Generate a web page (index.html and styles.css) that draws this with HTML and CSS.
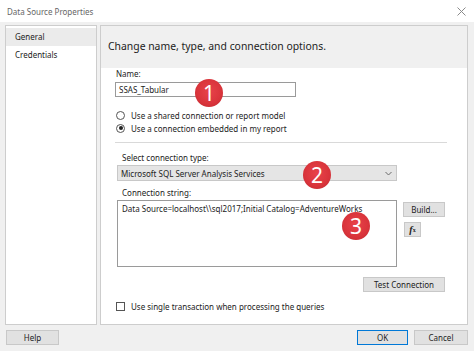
FILE: index.html
```html
<!DOCTYPE html>
<html lang="en">
	<head>
		<meta charset="UTF-8" />
		<meta name="viewport" content="width=device-width, initial-scale=1.0" />
		<title>Data Source Properties</title>
		<link rel="stylesheet" href="styles.css">
	</head>
	<body>
		<div class="titlebar">
			<span class="title">Data Source Properties</span>
			<svg class="close" width="9" height="9" viewBox="0 0 9 9">
				<path d="M0.5 0.5 L8.5 8.5 M8.5 0.5 L0.5 8.5" stroke="#8a8a8a" stroke-width="1" fill="none" />
			</svg>
		</div>

		<div class="main">
			<div class="nav">
				<div class="nav-item selected">General</div>
				<div class="nav-item">Credentials</div>
			</div>

			<div class="panel">
				<div class="panel-header">Change name, type, and connection options.</div>

				<div class="panel-body">
					<div class="label">Name:</div>
					<div class="textbox name-box">SSAS_Tabular</div>

					<label class="radio-row first">
						<span class="radio"></span>
						Use a shared connection or report model
					</label>
					<label class="radio-row">
						<span class="radio checked"></span>
						Use a connection embedded in my report
					</label>

					<div class="separator"></div>

					<div class="group">
						<div class="label indent">Select connection type:</div>
						<div class="dropdown">
							<span>Microsoft SQL Server Analysis Services</span>
							<svg width="7" height="5" viewBox="0 0 7 5">
								<path d="M0.5 1 L3.5 4 L6.5 1" stroke="#6a6a6a" stroke-width="1" fill="none" />
							</svg>
						</div>

						<div class="label indent conn-label">Connection string:</div>
						<div class="conn-row">
							<div class="textarea">Data Source=localhost\\sql2017;Initial Catalog=AdventureWorks</div>
							<div class="side-buttons">
								<div class="btn build">Build...</div>
								<div class="btn fx"><i>f</i><sub>x</sub></div>
							</div>
						</div>

						<div class="test-row">
							<div class="btn test">Test Connection</div>
						</div>
					</div>

					<label class="check-row">
						<span class="checkbox"></span>
						Use single transaction when processing the queries
					</label>
				</div>

				<div class="badge badge-1">1</div>
				<div class="badge badge-2">2</div>
				<div class="badge badge-3">3</div>
			</div>
		</div>

		<div class="footer">
			<div class="btn help">Help</div>
			<div class="footer-right">
				<div class="btn ok">OK</div>
				<div class="btn cancel">Cancel</div>
			</div>
		</div>
	</body>
</html>
```

FILE: styles.css
```css
body {
	margin: 0;
	width: 474px;
	height: 351px;
	background: #f0f0f0;
	font-family: "Noto Sans", "Open Sans", sans-serif;
	font-size: 8px;
	color: #222;
	overflow: hidden;
}

.titlebar {
	height: 22px;
	background: #fff;
	display: flex;
	align-items: center;
	justify-content: space-between;
	padding: 0 8px 0 7px;
}

.title {
	color: #666;
	font-size: 8px;
}

.main {
	display: flex;
	gap: 3px;
	height: 300px;
	padding: 3px 6px 0 5px;
}

.nav {
	width: 90px;
	background: #fff;
	border: 1px solid #cdcdcd;
	padding-top: 2px;
}

.nav-item {
	height: 18px;
	line-height: 18px;
	padding-left: 9px;
}

.nav-item.selected {
	background: #ebebeb;
}

.panel {
	flex: 1;
	position: relative;
	background: #fff;
	border: 1px solid #cdcdcd;
}

.panel-header {
	height: 42px;
	background: #f0f0f0;
	font-size: 10.4px;
	line-height: 40px;
	padding-left: 7px;
	color: #222;
}

.panel-body {
	padding: 0 0 0 14px;
}

.label {
	height: 11px;
	line-height: 11px;
	padding-left: 1px;
}

.label.indent {
	padding-left: 5px;
}

.textbox {
	margin-top: 3px;
	box-sizing: border-box;
	height: 15px;
	border: 1px solid #9a9a9a;
	line-height: 13px;
	padding-left: 3px;
}

.name-box {
	width: 181px;
}

.radio-row,
.check-row {
	display: flex;
	align-items: center;
	gap: 6px;
	height: 12px;
	padding-left: 1px;
}

.radio-row.first {
	margin-top: 12px;
}

.radio-row + .radio-row {
	margin-top: 1px;
}

.radio {
	box-sizing: border-box;
	width: 9px;
	height: 9px;
	border: 1px solid #555;
	border-radius: 50%;
	position: relative;
}

.radio.checked::after {
	content: "";
	position: absolute;
	left: 1.5px;
	top: 1.5px;
	width: 4px;
	height: 4px;
	border-radius: 50%;
	background: #222;
}

.separator {
	margin: 8px 20px 0 0;
	height: 1px;
	background: #d9d9d9;
}

.group {
	padding-left: 2px;
	width: 329px;
}

.group > .label:first-child {
	margin-top: 9px;
}

.dropdown {
	margin-top: 2px;
	box-sizing: border-box;
	width: 280px;
	height: 16px;
	background: #e5e5e5;
	border: 1px solid #c8c8c8;
	display: flex;
	align-items: center;
	justify-content: space-between;
	padding: 0 4px 0 3px;
}

.conn-label {
	margin-top: 6px;
}

.conn-row {
	margin-top: 2px;
	display: flex;
	gap: 6px;
}

.textarea {
	box-sizing: border-box;
	width: 280px;
	height: 67px;
	border: 1px solid #9a9a9a;
	padding: 3px 0 0 4px;
	line-height: 10px;
}

.side-buttons {
	display: flex;
	flex-direction: column;
	align-items: flex-start;
	gap: 5px;
	padding-top: 2px;
}

.btn {
	box-sizing: border-box;
	height: 15px;
	background: #e1e1e1;
	border: 1px solid #c8c8c8;
	display: flex;
	align-items: center;
	justify-content: center;
}

.build {
	width: 42px;
}

.fx {
	width: 17px;
	margin-left: 1px;
	font-family: "Liberation Serif", serif;
	font-weight: bold;
	font-size: 10px;
}

.fx sub {
	font-size: 6px;
	vertical-align: -1px;
}

.test-row {
	margin-top: 10px;
	display: flex;
	justify-content: flex-end;
	padding-right: 1px;
}

.test {
	width: 82px;
}

.check-row {
	margin-top: 8px;
}

.checkbox {
	box-sizing: border-box;
	width: 9px;
	height: 9px;
	border: 1px solid #555;
}

.badge {
	position: absolute;
	width: 28px;
	height: 28px;
	border-radius: 50%;
	background: radial-gradient(circle at 50% 45%, #e8434a 0%, #d9343b 60%, #b9272d 100%);
	color: #fff;
	font-size: 21px;
	line-height: 28px;
	text-align: center;
}

.badge-1 {
	left: 94px;
	top: 53px;
}

.badge-2 {
	left: 202px;
	top: 135px;
}

.badge-3 {
	left: 241px;
	top: 186px;
}

.footer {
	display: flex;
	justify-content: space-between;
	padding: 5px 6px 0 6px;
}

.footer-right {
	display: flex;
	gap: 6px;
}

.help {
	width: 53px;
}

.ok {
	width: 51px;
	border-color: #0078d7;
}

.cancel {
	width: 54px;
}
```
